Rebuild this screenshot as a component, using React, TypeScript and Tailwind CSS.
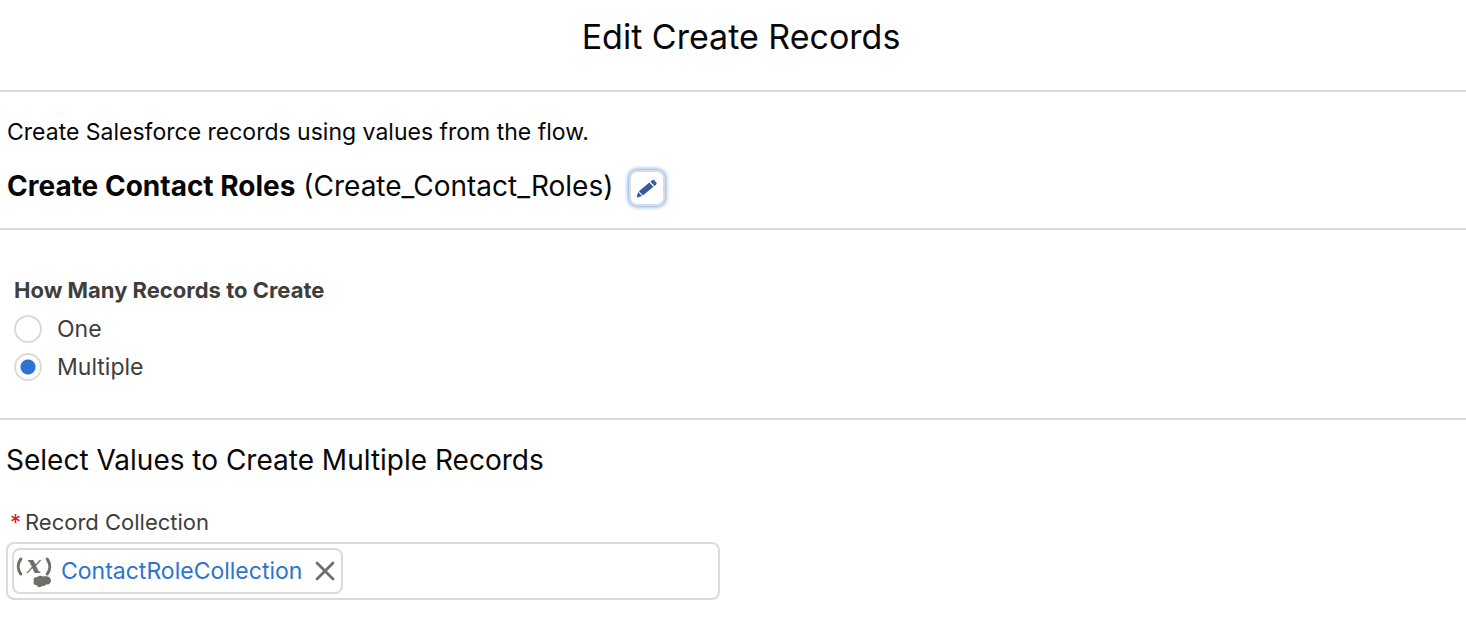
import { useState } from "react";

const RECORD_OPTIONS = [
  { value: "one", label: "One" },
  { value: "multiple", label: "Multiple" },
];

function PencilIcon() {
  return (
    <svg viewBox="0 0 22 20" className="h-5 w-[22px]" fill="#3a5b98" aria-hidden="true">
      <path d="M2.9 13.2 13.4 4.6l4 4.2L6.9 17.4z" />
      <path d="M14.5 3.7 16.2 2.2q1-.8 1.9.1l2.2 2.3q.8 1-.1 1.8L18.5 7.9z" />
      <path d="M2.1 14 6 18 1.6 19.4Q.7 19.6.8 18.6z" />
    </svg>
  );
}

function VariableIcon() {
  return (
    <svg viewBox="0 -8 36 42" className="h-[42px] w-9" fill="#706e6b" aria-hidden="true">
      <path d="M4.8 1C1.4 5.6 1.4 11.4 4.8 16" fill="none" stroke="#706e6b" strokeWidth="3" strokeLinecap="round" />
      <path d="M31.2 1c3.4 4.6 3.4 10.4 0 15" fill="none" stroke="#706e6b" strokeWidth="3" strokeLinecap="round" />
      <text x="18" y="15" textAnchor="middle" fontSize="24" fontWeight="bold" fontStyle="italic" fontFamily="DejaVu Serif, serif">
        x
      </text>
      <path d="M20.8 19.4c1.6-2.2 4.4-2.2 6.2-.8 3.4-1.2 8 .2 8 3.8 0 3-2.8 4.4-5 4.2-1.2 1.4-2.6 1.6-3.8 1.4-1.8 2-5 1.2-5.8-.9-2.6 0-3.6-2.3-2.4-4.1-1.4-2 .4-4.4 2.8-3.6z" />
    </svg>
  );
}

export default function App() {
  const [count, setCount] = useState("multiple");
  const [collection, setCollection] = useState<string | null>("ContactRoleCollection");
  const [query, setQuery] = useState("");

  return (
    <main className="bg-white font-['Inter',sans-serif] text-[#080707]">
      <header className="border-b-2 border-[#dddbda] pt-4 pb-8 pl-4 text-center">
        <h1 className="text-[34px] leading-[42px]">Edit Create Records</h1>
      </header>

      <section className="border-b-2 border-[#dddbda] px-[7px] pt-6 pb-[22px]">
        <p className="text-[23px] leading-8">Create Salesforce records using values from the flow.</p>
        <div className="mt-5 flex items-end gap-4">
          <h2 className="pb-[2px] text-[28px] leading-9">
            <span className="font-bold">Create Contact Roles</span> (Create_Contact_Roles)
          </h2>
          <button
            type="button"
            aria-label="Edit label and API name"
            className="flex size-9 items-center justify-center rounded-lg border-2 border-[#dddbda] bg-white shadow-[0_0_4px_1px_#6ea8ee]"
          >
            <PencilIcon />
          </button>
        </div>
      </section>

      <section className="border-b-2 border-[#dddbda] px-[14px] pt-11 pb-8">
        <fieldset>
          <legend className="text-[22px] leading-8 font-bold text-[#3e3e3c]">How Many Records to Create</legend>
          <div className="mt-1">
            {RECORD_OPTIONS.map((option) => (
              <label key={option.value} className="flex h-[38px] items-center gap-[15px] text-[23px] leading-8 text-[#3e3e3c]">
                <input
                  type="radio"
                  name="record-count"
                  value={option.value}
                  checked={count === option.value}
                  onChange={() => setCount(option.value)}
                  className="size-7 appearance-none rounded-full border-2 border-[#dddbda] bg-white checked:bg-[radial-gradient(circle,#2d74d0_7px,#fff_8px)]"
                />
                {option.label}
              </label>
            ))}
          </div>
        </fieldset>
      </section>

      <section className="pt-5 pr-8 pb-[18px] pl-[6px]">
        <h2 className="text-[28px] leading-10">Select Values to Create Multiple Records</h2>
        <div className="mt-[26px] w-1/2">
          <label htmlFor="collection" className="flex gap-1 px-1 text-[22px] leading-8 text-[#3e3e3c]">
            <span className="text-[#d6161b]">*</span>
            Record Collection
          </label>
          <div className="mt-1 flex h-[58px] items-center gap-2 rounded-lg border-2 border-[#dddbda] bg-white px-1">
            {collection && (
              <span className="flex h-[46px] items-center rounded-lg border-2 border-[#dddbda] px-[2px] text-[23px] leading-8">
                <VariableIcon />
                <a href="#collection" className="ml-[9px] text-[#2d74d0]">{collection}</a>
                <button
                  type="button"
                  aria-label="Remove ContactRoleCollection"
                  onClick={() => setCollection(null)}
                  className="ml-[9px] flex size-7 items-center justify-center"
                >
                  <svg viewBox="0 0 20 20" className="size-5" stroke="#706e6b" strokeWidth="2.8" strokeLinecap="round" aria-hidden="true">
                    <path d="M2 2 18 18M18 2 2 18" />
                  </svg>
                </button>
              </span>
            )}
            <input
              id="collection"
              type="text"
              value={query}
              onChange={(e) => setQuery(e.target.value)}
              className="min-w-0 flex-1 text-[23px] outline-none"
            />
          </div>
        </div>
      </section>
    </main>
  );
}
